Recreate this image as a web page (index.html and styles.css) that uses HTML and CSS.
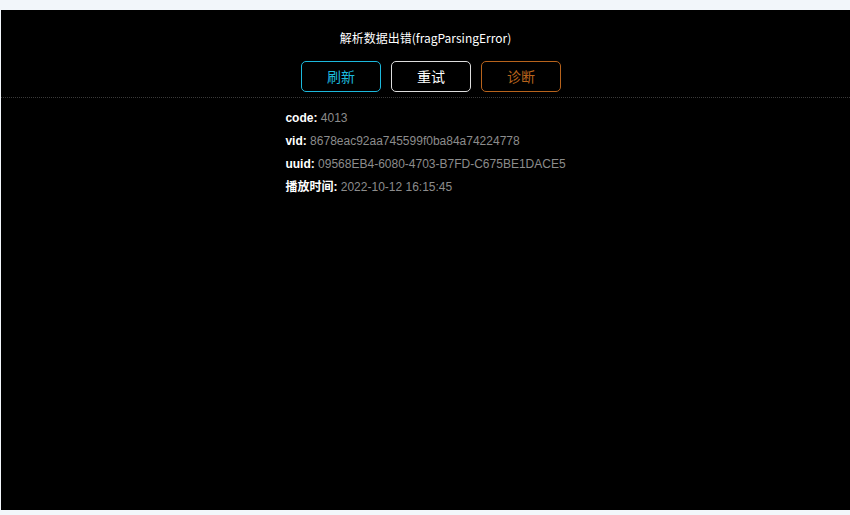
FILE: index.html
```html
<!DOCTYPE html>
<html lang="zh">
<head>
<meta charset="utf-8">
<link rel="stylesheet" href="styles.css">
</head>
<body>
<div class="player">
  <div class="error-head">
    <div class="title">解析数据出错(fragParsingError)</div>
    <div class="actions">
      <button class="btn btn-refresh">刷新</button>
      <button class="btn btn-retry">重试</button>
      <button class="btn btn-diag">诊断</button>
    </div>
  </div>
  <div class="info-wrap">
    <ul class="info">
      <li><b>code:</b> <span>4013</span></li>
      <li><b>vid:</b> <span>8678eac92aa745599f0ba84a74224778</span></li>
      <li><b>uuid:</b> <span>09568EB4-6080-4703-B7FD-C675BE1DACE5</span></li>
      <li><b>播放时间:</b> <span>2022-10-12 16:15:45</span></li>
    </ul>
  </div>
</div>
</body>
</html>
```
FILE: styles.css
```css
html, body {
  margin: 0;
  padding: 0;
  background: #f2f6fa;
}
body {
  padding: 10px 0 5px 1px;
  font-family: "Liberation Sans", "Noto Sans CJK SC", sans-serif;
}
.player {
  height: 500px;
  background: #000;
}
.error-head {
  padding: 19px 0 5px;
  border-bottom: 1px dotted #3a3a3a;
}
.title {
  text-align: center;
  color: #fff;
  font-size: 12px;
  line-height: 17px;
  font-family: "Noto Sans CJK SC", "Liberation Sans", sans-serif;
}
.actions {
  margin-top: 15px;
  display: flex;
  justify-content: center;
  gap: 10px;
  padding-left: 11px;
}
.btn {
  width: 80px;
  height: 31px;
  box-sizing: border-box;
  background: transparent;
  border: 1px solid;
  border-radius: 5px;
  font-size: 14px;
  font-family: "Noto Sans CJK SC", sans-serif;
  padding: 0;
  line-height: 29px;
}
.btn-refresh { color: #1cb9dd; border-color: #1cb9dd; }
.btn-retry { color: #fff; border-color: #ddd; }
.btn-diag { color: #b8631c; border-color: #b8631c; }
.info-wrap {
  display: flex;
  justify-content: center;
  padding-top: 9px;
}
.info {
  list-style: none;
  margin: 0;
  padding: 0;
  font-size: 12px;
  line-height: 23px;
}
.info b {
  color: #fff;
  font-weight: bold;
}
.info span {
  color: #8c8c8c;
}
```
